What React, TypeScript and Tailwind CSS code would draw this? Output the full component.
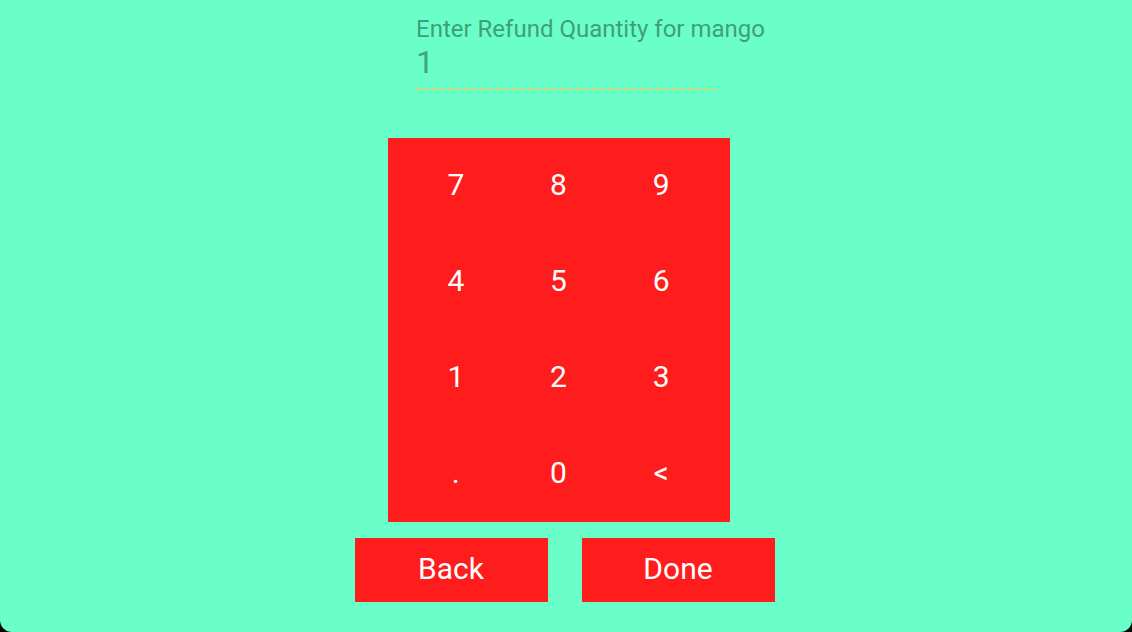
import React from "react";

const rows = [
  ["7", "8", "9"],
  ["4", "5", "6"],
  ["1", "2", "3"],
  [".", "0", "<"],
];

const dashes = Array.from({ length: 38 }, (_, i) => i);

export default function App() {
  return (
    <div className="w-[1132px] h-[632px] bg-black" style={{ fontFamily: "Roboto, 'Noto Sans', sans-serif" }}>
      <div className="w-full h-full bg-[#6affc8] rounded-b-[12px] flex flex-col items-center">
        <div className="w-[300px] mt-[15px]">
          <div className="text-[24px] leading-[28px] text-[#3f9f7b] whitespace-nowrap">Enter Refund Quantity for mango</div>
          <div className="mt-[1px] text-[32px] leading-[37px] text-[#43a27e]">1</div>
          <div className="mt-[7px] h-[2px] w-[300px] flex gap-[3px] overflow-hidden">
            {dashes.map((i) => (
              <div key={i} className="w-[5px] h-[2px] shrink-0 bg-[#cfd86b]" />
            ))}
          </div>
        </div>
        <div className="mt-[48px] mr-[15px] w-[342px] bg-[#ff1c1c] px-[17px] grid grid-cols-3">
          {rows.flat().map((k) => (
            <div key={k} className="h-[96px] pb-[3px] flex items-center justify-center text-white text-[30px]">
              {k}
            </div>
          ))}
        </div>
        <div className="mt-[16px] mr-[3px] flex gap-[34px]">
          <button className="w-[193px] h-[64px] pb-[3px] bg-[#ff1c1c] text-white text-[30px] flex items-center justify-center">Back</button>
          <button className="w-[193px] h-[64px] pb-[3px] bg-[#ff1c1c] text-white text-[30px] flex items-center justify-center">Done</button>
        </div>
      </div>
    </div>
  );
}
